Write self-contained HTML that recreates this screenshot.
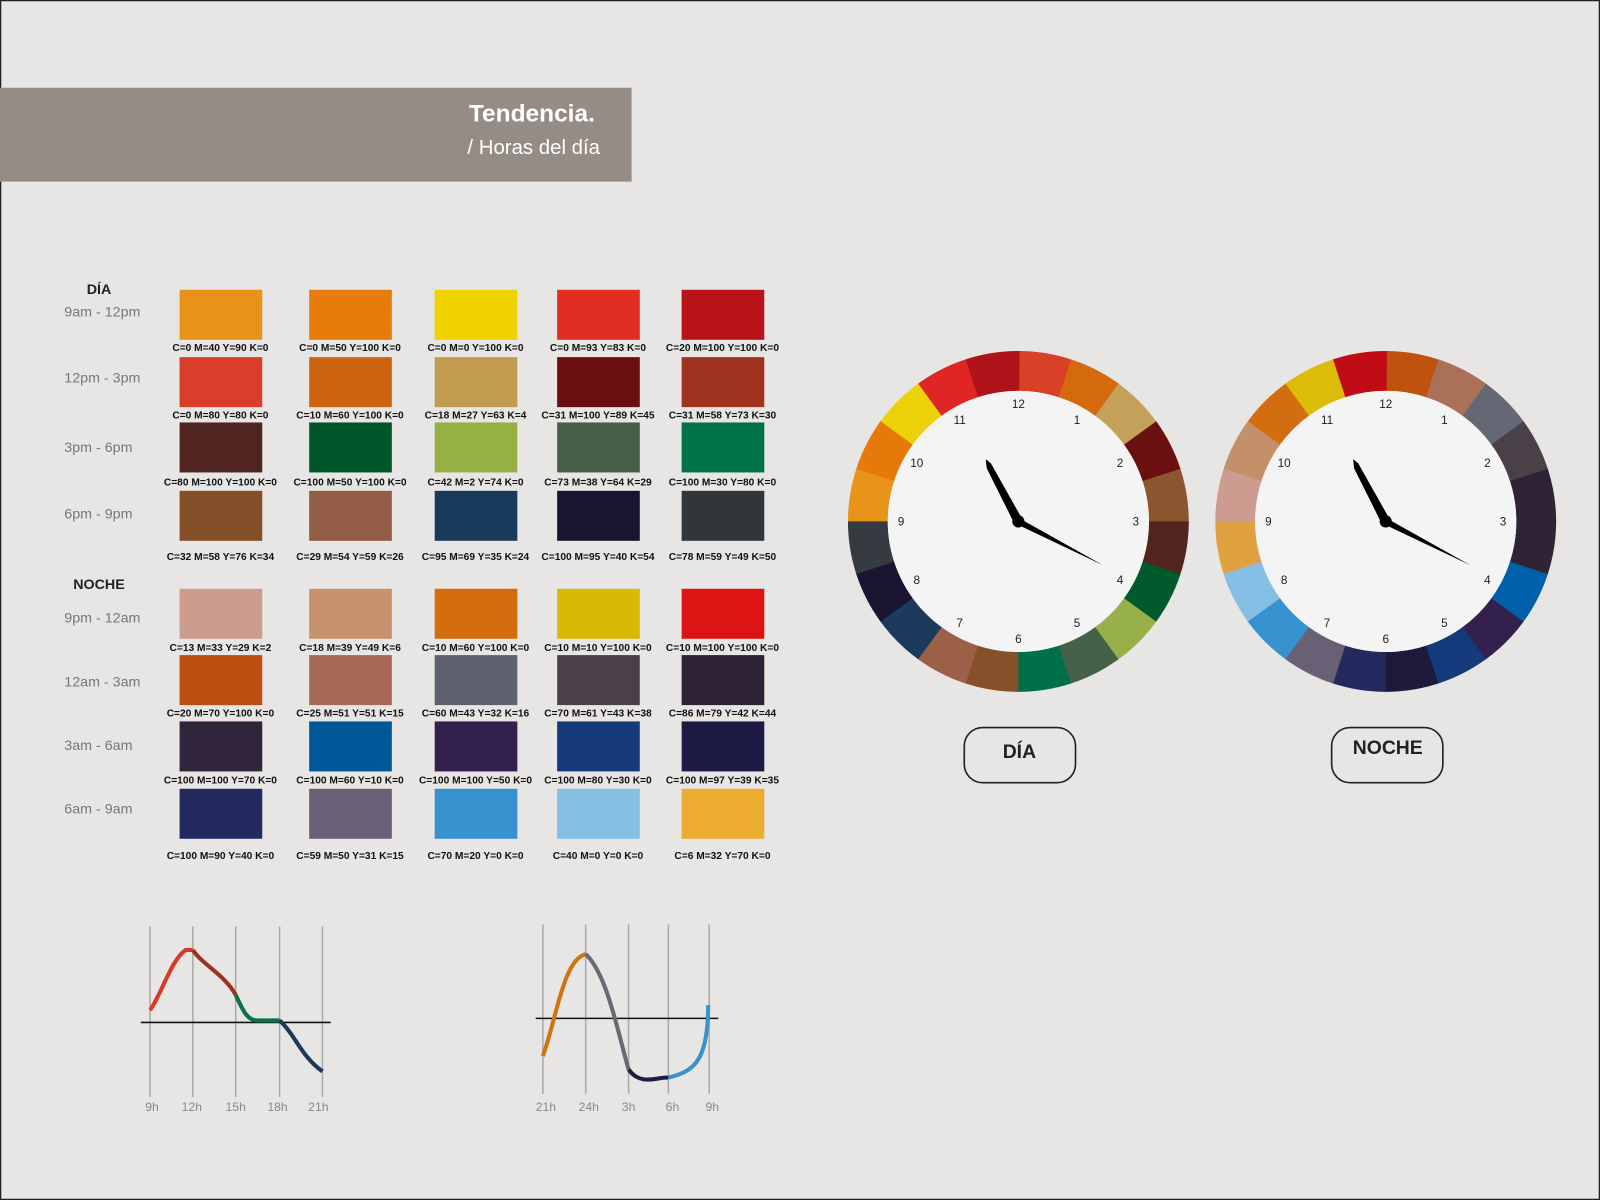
<!DOCTYPE html>
<html><head><meta charset="utf-8"><style>
html,body{margin:0;padding:0;background:#e8e6e4;}
svg{display:block;}
text{font-family:"Liberation Sans",sans-serif;}
</style></head><body>
<svg id="s" width="1600" height="1200" viewBox="0 0 1568 1176" preserveAspectRatio="none" xmlns="http://www.w3.org/2000/svg">
<rect x="0" y="0" width="1568" height="1176" fill="#e8e6e4"/>
<rect x="0.5" y="0.5" width="1567" height="1175" fill="none" stroke="#222" stroke-width="1.5"/>
<rect x="0" y="86" width="619" height="92" fill="#958d85"/>
<text x="583" y="119" font-size="24" font-weight="bold" fill="#fff" text-anchor="end">Tendencia.</text>
<text x="588" y="151" font-size="20" fill="#fff" text-anchor="end">/ Horas del día</text>
<g id="sw"></g>
<g id="clocks"></g>
<rect x="945" y="713" width="109" height="54" rx="18" fill="none" stroke="#222" stroke-width="1.6"/>
<text x="999" y="743" font-size="19" font-weight="bold" fill="#222" text-anchor="middle">DÍA</text>
<rect x="1305" y="713" width="109" height="54" rx="18" fill="none" stroke="#222" stroke-width="1.6"/>
<text x="1360" y="739" font-size="19" font-weight="bold" fill="#222" text-anchor="middle">NOCHE</text>
<g stroke="#aaa" stroke-width="1.5">
<line x1="147" y1="908" x2="147" y2="1075"/><line x1="189" y1="908" x2="189" y2="1075"/><line x1="231" y1="908" x2="231" y2="1075"/><line x1="274" y1="908" x2="274" y2="1075"/><line x1="316" y1="908" x2="316" y2="1075"/>
<line x1="532" y1="906" x2="532" y2="1072"/><line x1="574" y1="906" x2="574" y2="1072"/><line x1="616" y1="906" x2="616" y2="1072"/><line x1="655" y1="906" x2="655" y2="1072"/><line x1="695" y1="906" x2="695" y2="1072"/>
</g>
<line x1="138" y1="1002" x2="324" y2="1002" stroke="#111" stroke-width="1.5"/>
<line x1="525" y1="998" x2="704" y2="998" stroke="#111" stroke-width="1.5"/>
<g fill="none" stroke-width="4" stroke-linecap="butt">
<path d="M147 990 C158 975 168 940 182 931 L189 931" stroke="#d9392a"/>
<path d="M189 931 C198 945 220 955 231 975" stroke="#9a3320"/>
<path d="M231 975 C238 990 242 1000 252 1000 L274 1000" stroke="#0b7247"/>
<path d="M274 1000 C290 1015 295 1035 316 1050" stroke="#1b3a58"/>
<path d="M532 1035 C545 1000 552 940 574 935" stroke="#d07410"/>
<path d="M574 935 C595 955 605 1010 616 1048" stroke="#666a72"/>
<path d="M616 1048 C628 1065 645 1055 655 1056" stroke="#221c44"/>
<path d="M655 1056 C680 1050 694 1040 694 985" stroke="#3a92cc"/>
</g>
<g font-size="12" fill="#888" text-anchor="middle">
<text x="149" y="1089">9h</text><text x="188" y="1089">12h</text><text x="231" y="1089">15h</text><text x="272" y="1089">18h</text><text x="312" y="1089">21h</text>
<text x="535" y="1089">21h</text><text x="577" y="1089">24h</text><text x="616" y="1089">3h</text><text x="659" y="1089">6h</text><text x="698" y="1089">9h</text>
</g>
<g font-size="14" fill="#777">
<text x="63" y="310">9am - 12pm</text><text x="63" y="375">12pm - 3pm</text><text x="63" y="443">3pm - 6pm</text><text x="63" y="508">6pm - 9pm</text>
<text x="63" y="610">9pm - 12am</text><text x="63" y="673">12am - 3am</text><text x="63" y="735">3am - 6am</text><text x="63" y="797">6am - 9am</text>
</g>
<text x="97" y="288" font-size="14" font-weight="bold" fill="#222" text-anchor="middle">DÍA</text>
<text x="97" y="577" font-size="14" font-weight="bold" fill="#222" text-anchor="middle">NOCHE</text>
</svg>
<script>
var NS="http://www.w3.org/2000/svg";
function el(p,t,a,txt){var e=document.createElementNS(NS,t);for(var k in a)e.setAttribute(k,a[k]);if(txt)e.textContent=txt;p.appendChild(e);return e;}
var cols=[176,303,426,546,668];
var rows=[[284,340],[350,406],[414,472],[481,545],[577,634],[642,698],[707,764],[773,838]];
var data=[
[["#e8921a","C=0 M=40 Y=90 K=0"],["#e67c0c","C=0 M=50 Y=100 K=0"],["#efd200","C=0 M=0 Y=100 K=0"],["#e12e22","C=0 M=93 Y=83 K=0"],["#b81418","C=20 M=100 Y=100 K=0"]],
[["#da3e2a","C=0 M=80 Y=80 K=0"],["#cc6310","C=10 M=60 Y=100 K=0"],["#c39b50","C=18 M=27 Y=63 K=4"],["#6a0e10","C=31 M=100 Y=89 K=45"],["#a03320","C=31 M=58 Y=73 K=30"]],
[["#502420","C=80 M=100 Y=100 K=0"],["#005628","C=100 M=50 Y=100 K=0"],["#97b044","C=42 M=2 Y=74 K=0"],["#475e48","C=73 M=38 Y=64 K=29"],["#007448","C=100 M=30 Y=80 K=0"]],
[["#83502a","C=32 M=58 Y=76 K=34"],["#935c44","C=29 M=54 Y=59 K=26"],["#1a3a5c","C=95 M=69 Y=35 K=24"],["#1a1430","C=100 M=95 Y=40 K=54"],["#31363a","C=78 M=59 Y=49 K=50"]],
[["#cc9c8e","C=13 M=33 Y=29 K=2"],["#c6916c","C=18 M=39 Y=49 K=6"],["#d36c0c","C=10 M=60 Y=100 K=0"],["#dab806","C=10 M=10 Y=100 K=0"],["#dc1414","C=10 M=100 Y=100 K=0"]],
[["#bc4e10","C=20 M=70 Y=100 K=0"],["#a86a54","C=25 M=51 Y=51 K=15"],["#5e6270","C=60 M=43 Y=32 K=16"],["#4a4048","C=70 M=61 Y=43 K=38"],["#2e2336","C=86 M=79 Y=42 K=44"]],
[["#30253a","C=100 M=100 Y=70 K=0"],["#005898","C=100 M=60 Y=10 K=0"],["#33204e","C=100 M=100 Y=50 K=0"],["#173a7a","C=100 M=80 Y=30 K=0"],["#1e1a46","C=100 M=97 Y=39 K=35"]],
[["#232a60","C=100 M=90 Y=40 K=0"],["#6a6076","C=59 M=50 Y=31 K=15"],["#3692cf","C=70 M=20 Y=0 K=0"],["#86bfe4","C=40 M=0 Y=0 K=0"],["#ebac30","C=6 M=32 Y=70 K=0"]]];
var sw=document.getElementById("sw");
for(var r=0;r<8;r++)for(var c=0;c<5;c++){
 var y=rows[r][0];
 el(sw,"rect",{x:cols[c],y:y,width:81,height:49,fill:data[r][c][0]});
 el(sw,"text",{x:cols[c]+40,y:rows[r][1]+4,"font-size":"10","font-weight":"bold",fill:"#111","text-anchor":"middle"},data[r][c][1]);
}
var day=["#d94028","#d4690e","#c4a15a","#6b1010","#8b5530","#522420","#005a2c","#97b04a","#46614a","#00704a","#84512b","#9c6048","#1b3a5c","#1a1430","#353b40","#e8941a","#e57a0a","#ecd00a","#df2624","#b0141a"];
var night=["#c0520f","#ab7058","#636874","#4a4048","#2e2436","#2e2436","#0061aa","#33204f","#163b7c","#1e1a3c","#252a5e","#6a6076","#3592cf","#86bfe5","#e0a240","#cc9c90","#c4906a","#d36e10","#dcbc08","#c00c14"];
var g=document.getElementById("clocks");
function clock(cx,cy,colsA){
 var R=167,ri=128;
 for(var i=0;i<20;i++){
  var a0=(i*18-90)*Math.PI/180,a1=((i+1)*18-90+0.4)*Math.PI/180;
  var d="M"+(cx+R*Math.cos(a0))+" "+(cy+R*Math.sin(a0))+" A"+R+" "+R+" 0 0 1 "+(cx+R*Math.cos(a1))+" "+(cy+R*Math.sin(a1))+" L"+(cx+ri*Math.cos(a1))+" "+(cy+ri*Math.sin(a1))+" A"+ri+" "+ri+" 0 0 0 "+(cx+ri*Math.cos(a0))+" "+(cy+ri*Math.sin(a0))+"Z";
  el(g,"path",{d:d,fill:colsA[i]});
 }
 el(g,"circle",{cx:cx,cy:cy,r:ri,fill:"#f5f4f4"});
 for(var n=1;n<=12;n++){var a=(n*30-90)*Math.PI/180;
  el(g,"text",{x:cx+115*Math.cos(a),y:cy+115*Math.sin(a)+4,"font-size":"11.5",fill:"#222","text-anchor":"middle"},""+n);}
 el(g,"polygon",{points:(cx-32)+","+(cy-61)+" "+(cx-27)+","+(cy-57)+" "+(cx+4)+","+(cy-2)+" "+(cx-4)+","+(cy+2)+" "+(cx-31)+","+(cy-52),fill:"#000"});
 el(g,"polygon",{points:(cx+1)+","+(cy-3)+" "+(cx+83)+","+(cy+43)+" "+(cx-1)+","+(cy+3),fill:"#000"});
 el(g,"circle",{cx:cx,cy:cy,r:6,fill:"#000"});
}
clock(998,511,day);clock(1358,511,night);
</script>
</body></html>
